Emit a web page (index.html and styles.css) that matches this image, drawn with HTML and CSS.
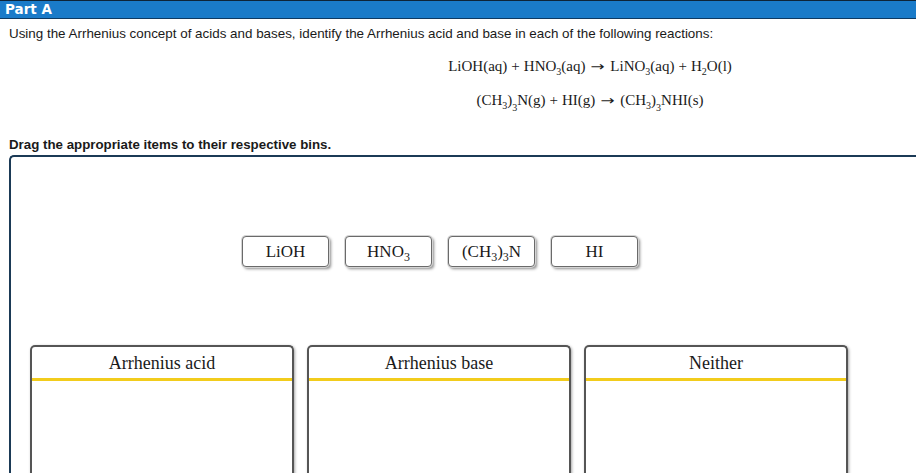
FILE: index.html
```html
<!DOCTYPE html>
<html lang="en">
<head>
  <meta charset="UTF-8" />
  <title>Part A</title>
  <link rel="stylesheet" href="styles.css">
</head>
<body>
  <div class="part-header">Part A</div>
  <p class="prompt">Using the Arrhenius concept of acids and bases, identify the Arrhenius acid and base in each of the following reactions:</p>
  <div class="equations">
    <div class="eq">LiOH(aq)<span class="op">+</span>HNO<sub>3</sub>(aq)<span class="op arrow">&rarr;</span>LiNO<sub>3</sub>(aq)<span class="op">+</span>H<sub>2</sub>O(l)</div>
    <div class="eq">(CH<sub>3</sub>)<sub class="low">3</sub>N(g)<span class="op">+</span>HI(g)<span class="op arrow">&rarr;</span>(CH<sub>3</sub>)<sub class="low">3</sub>NHI(s)</div>
  </div>
  <p class="instruction">Drag the appropriate items to their respective bins.</p>
  <div class="drag-area">
    <div class="items">
      <div class="item">LiOH</div>
      <div class="item">HNO<sub>3</sub></div>
      <div class="item">(CH<sub>3</sub>)<sub>3</sub>N</div>
      <div class="item">HI</div>
    </div>
    <div class="bins">
      <div class="bin"><div class="bin-title">Arrhenius acid</div></div>
      <div class="bin"><div class="bin-title">Arrhenius base</div></div>
      <div class="bin"><div class="bin-title">Neither</div></div>
    </div>
  </div>
</body>
</html>
```

FILE: styles.css
```css
body {
  margin: 0;
  font-family: "Liberation Sans", Arial, sans-serif;
  background: white;
  color: #1a1a1a;
  overflow: hidden;
}
.part-header {
  background: #1a7bc9;
  border-top: 1px solid #0e2438;
  border-bottom: 1px solid #0e3a62;
  color: white;
  font-family: "DejaVu Sans", Verdana, sans-serif;
  font-weight: bold;
  font-size: 13.5px;
  line-height: 17px;
  padding: 0 5px;
}
.prompt {
  margin: 7px 0 0 9px;
  font-size: 13.4px;
  line-height: 16px;
}
.equations {
  padding-left: 264px;
  margin-top: 16px;
  font-family: "Liberation Serif", "DejaVu Serif", serif;
  font-size: 15px;
  text-align: center;
}
.eq {
  line-height: 17px;
  margin-bottom: 17px;
}
.op {
  margin: 0 4px;
}
.arrow {
  display: inline-block;
  font-family: "DejaVu Sans", sans-serif;
  font-size: 13px;
  transform: scaleX(1.3);
  margin: 0 7px;
}
.eq sub, .item sub {
  font-size: 10px;
  line-height: 0;
}
.eq sub.low {
  vertical-align: -6px;
}
.instruction {
  margin: 28px 0 0 9px;
  font-size: 13.3px;
  font-weight: bold;
  line-height: 15px;
}
.drag-area {
  margin: 3px 0 0 9px;
  border-top: 2px solid #1b3a56;
  border-left: 2px solid #1b3a56;
  border-top-left-radius: 5px;
  height: 400px;
}
.items {
  display: flex;
  gap: 16px;
  padding: 79px 0 0 231px;
}
.item {
  width: 85px;
  height: 29px;
  border: 1px solid #6a6a6a;
  border-radius: 4px;
  box-shadow: 0 0 0 1px #d4d4d4, 2px 2px 3px rgba(0, 0, 0, 0.45);
  background: white;
  font-family: "Liberation Serif", "DejaVu Serif", serif;
  font-size: 17px;
  line-height: 29px;
  text-align: center;
}
.item sub {
  font-size: 12px;
}
.bins {
  display: flex;
  gap: 13px;
  padding: 78px 0 0 19px;
}
.bin {
  width: 260px;
  height: 200px;
  border: 2px solid #555;
  border-bottom: none;
  border-radius: 5px 5px 0 0;
  box-shadow: 1px 1px 3px rgba(0, 0, 0, 0.35);
}
.bin-title {
  font-family: "Liberation Serif", "DejaVu Serif", serif;
  font-size: 18px;
  line-height: 29px;
  padding-top: 2px;
  text-align: center;
  border-bottom: 3px solid #f2cc1c;
}
```
